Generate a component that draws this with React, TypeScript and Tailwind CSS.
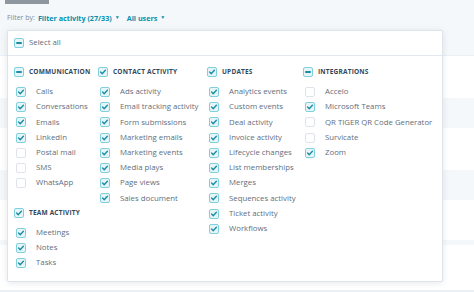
import React from "react";

type S = "on" | "off" | "mixed";

function Box({ state }: { state: S }) {
  if (state === "off")
    return <span className="w-[10px] h-[10px] shrink-0 rounded-[2px] border border-[#dfe3eb] bg-white" />;
  return (
    <span className="w-[10px] h-[10px] shrink-0 rounded-[2px] border border-[#7fcfdd] bg-[#e5f5f8] flex items-center justify-center">
      {state === "on" ? (
        <svg width="8" height="8" viewBox="0 0 8 8">
          <path d="M1.6 4.1 L3.2 5.7 L6.4 2.3" stroke="#1f8ca6" strokeWidth="1.4" fill="none" strokeLinecap="round" strokeLinejoin="round" />
        </svg>
      ) : (
        <span className="w-[6px] h-[1.5px] bg-[#1f8ca6] rounded-[1px]" />
      )}
    </span>
  );
}

function Header({ label, state }: { label: string; state: S }) {
  return (
    <div className="h-[16px] flex items-center gap-[5px]">
      <Box state={state} />
      <span className="text-[6.5px] font-bold tracking-[0.03em] text-[#33475b] whitespace-nowrap">{label}</span>
    </div>
  );
}

function Items({ items }: { items: [string, S][] }) {
  return (
    <div className="mt-[4.5px] flex flex-col">
      {items.map(([t, s]) => (
        <div key={t} className="h-[15.2px] flex items-center pl-[2px] gap-[10px]">
          <Box state={s} />
          <span className="text-[7.8px] text-[#5f6e7d] whitespace-nowrap">{t}</span>
        </div>
      ))}
    </div>
  );
}

export default function App() {
  return (
    <div className="relative w-[474px] h-[292px] overflow-hidden bg-white font-['Open_Sans',sans-serif]">
      <div className="flex flex-col">
        <div className="h-[55px] bg-[#f5f8fa] flex flex-col">
          <div className="ml-[5px] w-[44px] h-[4px] bg-[#8e979f]" />
          <div className="h-[28px] flex items-center pl-[7px]">
            <span className="text-[#7c8a98] text-[7px]">Filter by:</span>
            <span className="ml-[3px] font-bold text-[#0091ae] text-[7.2px]">Filter activity (27/33)</span>
            <span className="ml-[3px] text-[#0091ae] text-[5px]">▼</span>
            <span className="ml-[7px] font-bold text-[#0091ae] text-[7.2px]">All users</span>
            <span className="ml-[3px] text-[#0091ae] text-[5px]">▼</span>
          </div>
        </div>
        <div className="h-[43px] bg-white border-t border-[#eaf0f6]" />
        <div className="h-[30px] bg-[#f5f8fa]" />
        <div className="h-[42px] bg-white" />
        <div className="h-[30px] bg-[#f5f8fa]" />
        <div className="h-[40px] bg-white" />
        <div className="h-[5px] bg-[#f5f8fa]" />
        <div className="h-[45px] bg-white" />
        <div className="h-[2px] bg-[#eaf0f6]" />
      </div>

      <div className="absolute left-[7px] top-[30px] w-[436px] h-[252px] bg-white border border-[#dfe3eb] rounded-[2px] shadow-[0_1px_6px_rgba(45,62,80,0.12)] flex flex-col">
        <div className="h-[25px] shrink-0 flex items-center pl-[6px] gap-[5px] border-b border-[#e3e8ee]">
          <Box state="mixed" />
          <span className="text-[7.8px] text-[#5f6e7d]">Select all</span>
        </div>
        <div className="flex pl-[6px] pt-[8px]">
          <div className="w-[84px] shrink-0 flex flex-col">
            <Header label="COMMUNICATION" state="mixed" />
            <Items
              items={[
                ["Calls", "on"],
                ["Conversations", "on"],
                ["Emails", "on"],
                ["LinkedIn", "on"],
                ["Postal mail", "off"],
                ["SMS", "off"],
                ["WhatsApp", "off"],
              ]}
            />
            <div className="mt-[14px]">
              <Header label="TEAM ACTIVITY" state="on" />
              <Items
                items={[
                  ["Meetings", "on"],
                  ["Notes", "on"],
                  ["Tasks", "on"],
                ]}
              />
            </div>
          </div>
          <div className="w-[109px] shrink-0 flex flex-col">
            <Header label="CONTACT ACTIVITY" state="on" />
            <Items
              items={[
                ["Ads activity", "on"],
                ["Email tracking activity", "on"],
                ["Form submissions", "on"],
                ["Marketing emails", "on"],
                ["Marketing events", "on"],
                ["Media plays", "on"],
                ["Page views", "on"],
                ["Sales document", "on"],
              ]}
            />
          </div>
          <div className="w-[96px] shrink-0 flex flex-col">
            <Header label="UPDATES" state="on" />
            <Items
              items={[
                ["Analytics events", "on"],
                ["Custom events", "on"],
                ["Deal activity", "on"],
                ["Invoice activity", "on"],
                ["Lifecycle changes", "on"],
                ["List memberships", "on"],
                ["Merges", "on"],
                ["Sequences activity", "on"],
                ["Ticket activity", "on"],
                ["Workflows", "on"],
              ]}
            />
          </div>
          <div className="flex-1 flex flex-col">
            <Header label="INTEGRATIONS" state="mixed" />
            <Items
              items={[
                ["Accelo", "off"],
                ["Microsoft Teams", "on"],
                ["QR TIGER QR Code Generator", "off"],
                ["Survicate", "off"],
                ["Zoom", "on"],
              ]}
            />
          </div>
        </div>
      </div>
    </div>
  );
}
